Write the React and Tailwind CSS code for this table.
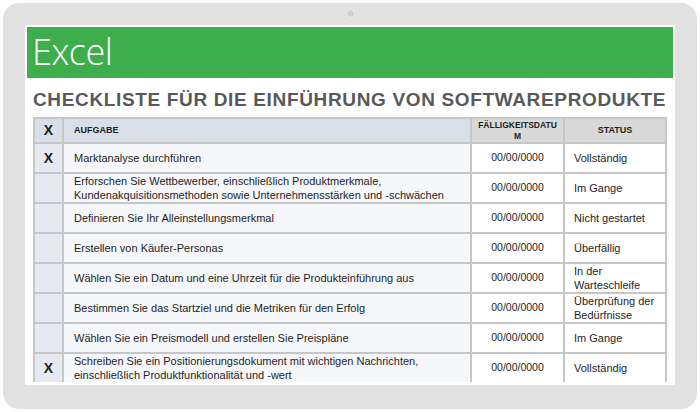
import React from 'react';

const rows = [
  { x: true, task: ['Marktanalyse durchführen'], status: ['Vollständig'] },
  {
    x: false,
    task: [
      'Erforschen Sie Wettbewerber, einschließlich Produktmerkmale,',
      'Kundenakquisitionsmethoden sowie Unternehmensstärken und -schwächen',
    ],
    status: ['Im Gange'],
  },
  { x: false, task: ['Definieren Sie Ihr Alleinstellungsmerkmal'], status: ['Nicht gestartet'] },
  { x: false, task: ['Erstellen von Käufer-Personas'], status: ['Überfällig'] },
  {
    x: false,
    task: ['Wählen Sie ein Datum und eine Uhrzeit für die Produkteinführung aus'],
    status: ['In der', 'Warteschleife'],
  },
  {
    x: false,
    task: ['Bestimmen Sie das Startziel und die Metriken für den Erfolg'],
    status: ['Überprüfung der', 'Bedürfnisse'],
  },
  { x: false, task: ['Wählen Sie ein Preismodell und erstellen Sie Preispläne'], status: ['Im Gange'] },
  {
    x: true,
    task: [
      'Schreiben Sie ein Positionierungsdokument mit wichtigen Nachrichten,',
      'einschließlich Produktfunktionalität und -wert',
    ],
    status: ['Vollständig'],
  },
];

export default function App() {
  return (
    <div className="w-[700px] h-[412px] bg-white p-[3px] font-['Liberation_Sans',Arial,sans-serif]">
      {/* device frame */}
      <div className="h-full rounded-[16px] bg-[#e1e1e1] flex flex-col px-[22px] pb-[24px]">
        <div className="h-[22px] flex justify-center pt-[6px]">
          <div className="w-[9px] h-[9px] rounded-full bg-[#cfcfcf] border border-[#f0f0f0]" />
        </div>

        {/* screen */}
        <div className="flex-1 bg-white pt-[2px] px-[2px] flex flex-col overflow-hidden">
          <div className="h-[51px] bg-[#3dae4b] flex items-center pl-[5px] pb-[2px]">
            <span className="text-white text-[36px] font-light leading-none font-['Open_Sans',sans-serif] tracking-[-0.5px]">
              Excel
            </span>
          </div>

          <div className="h-[39px] flex items-center pl-[6px] pt-[3px]">
            <h1 className="text-[19px] font-bold text-[#595959] leading-none tracking-[0.65px] whitespace-nowrap">
              CHECKLISTE FÜR DIE EINFÜHRUNG VON SOFTWAREPRODUKTE
            </h1>
          </div>

          <div className="ml-[6px] w-[634px] grid grid-cols-[27px_406px_91px_100px] auto-rows-[28px] grid-rows-[23px] gap-[2px] p-[2px] pb-0 bg-[#c6c6c6] text-[#1e1e1e]">
            <div className="bg-[#d8dfe9] flex items-center justify-center text-[14px] font-bold">X</div>
            <div className="bg-[#d8dfe9] flex items-center pl-[10px] text-[9px] font-bold">AUFGABE</div>
            <div className="bg-[#d9d9d9] flex items-center justify-center text-center text-[8.5px] font-bold leading-[11px]">
              FÄLLIGKEITSDATU
              <br />
              M
            </div>
            <div className="bg-[#d9d9d9] flex items-center justify-center text-[9px] font-bold">STATUS</div>

            {rows.map((r, i) => (
              <React.Fragment key={i}>
                <div className="bg-[#e6eaf0] flex items-center justify-center text-[14px] font-bold">
                  {r.x ? 'X' : ''}
                </div>
                <div className="bg-[#f6f7fa] flex flex-col justify-center pl-[10px] text-[11px] leading-[14px] whitespace-nowrap">
                  {r.task.map((t) => (
                    <span key={t}>{t}</span>
                  ))}
                </div>
                <div className="bg-white flex items-center justify-center text-[10.5px]">00/00/0000</div>
                <div className="bg-white flex flex-col justify-center pl-[9px] text-[11px] leading-[14px] whitespace-nowrap">
                  {r.status.map((s) => (
                    <span key={s}>{s}</span>
                  ))}
                </div>
              </React.Fragment>
            ))}
          </div>
        </div>
      </div>
    </div>
  );
}
